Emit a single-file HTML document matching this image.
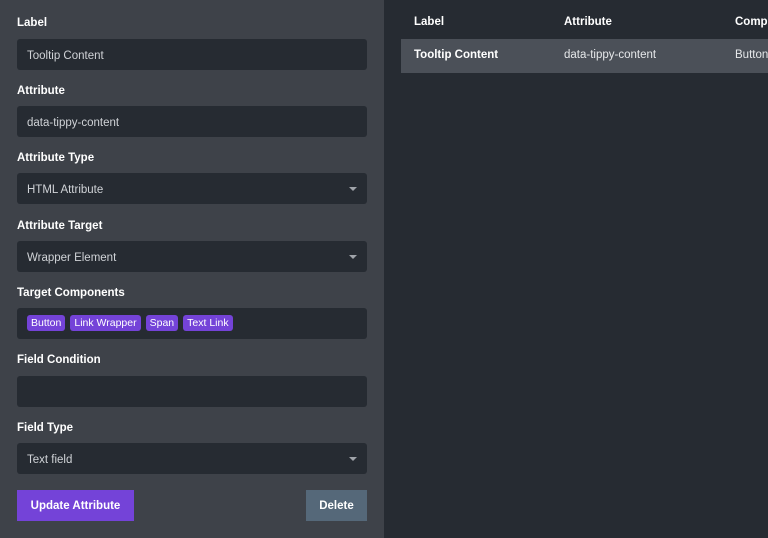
<!DOCTYPE html>
<html><head><style>
*{margin:0;padding:0;box-sizing:border-box}
body{width:768px;height:538px;overflow:hidden;font-family:"Liberation Sans",sans-serif;background:#262b32;position:relative}
.left{position:absolute;left:0;top:0;width:384px;height:538px;background:#3e4249}
.lab{position:absolute;left:17px;font-size:11.5px;font-weight:bold;color:#fff;line-height:14px}
.inp{position:absolute;left:17px;width:350px;height:31px;background:#262b32;border-radius:3px;color:#d0d3d7;font-size:11.5px;line-height:31px;padding-left:10px;padding-top:2px}
.arr{position:absolute;right:10px;top:14px;width:0;height:0;border-left:4px solid transparent;border-right:4px solid transparent;border-top:4px solid #a0a4aa}
.tag{display:inline-block;background:#7443d8;color:#fff;font-size:10.5px;line-height:16px;padding:0 4px;border-radius:3px;margin-right:5px;vertical-align:middle}
.btn{position:absolute;top:490px;height:31px;line-height:31px;color:#fff;font-weight:bold;font-size:11.5px;text-align:center;padding-top:1px}
.h{position:absolute;top:16px;font-size:11.5px;font-weight:bold;color:#fff}
.c{position:absolute;top:49px;font-size:11.5px;color:#e6e8ea}
</style></head><body>
<div class="left">
<div class="lab" style="top:16px">Label</div>
<div class="inp" style="top:39px">Tooltip Content</div>
<div class="lab" style="top:84px">Attribute</div>
<div class="inp" style="top:106px">data-tippy-content</div>
<div class="lab" style="top:151px">Attribute Type</div>
<div class="inp" style="top:173px">HTML Attribute<div class="arr"></div></div>
<div class="lab" style="top:219px">Attribute Target</div>
<div class="inp" style="top:241px">Wrapper Element<div class="arr"></div></div>
<div class="lab" style="top:286px">Target Components</div>
<div class="inp" style="top:308px;padding-left:10px;padding-top:0"><span class="tag">Button</span><span class="tag">Link Wrapper</span><span class="tag">Span</span><span class="tag">Text Link</span></div>
<div class="lab" style="top:353px">Field Condition</div>
<div class="inp" style="top:376px"></div>
<div class="lab" style="top:421px">Field Type</div>
<div class="inp" style="top:443px">Text field<div class="arr"></div></div>
<div class="btn" style="left:17px;width:117px;background:#7443d8">Update Attribute</div>
<div class="btn" style="left:306px;width:61px;background:#556879">Delete</div>
</div>
<div class="h" style="left:414px">Label</div>
<div class="h" style="left:564px">Attribute</div>
<div class="h" style="left:735px">Components</div>
<div style="position:absolute;left:401px;top:39px;width:367px;height:34px;background:#4b5058"></div>
<div class="c" style="left:414px;font-weight:bold;color:#fff">Tooltip Content</div>
<div class="c" style="left:564px">data-tippy-content</div>
<div class="c" style="left:735px">Button</div>
</body></html>
